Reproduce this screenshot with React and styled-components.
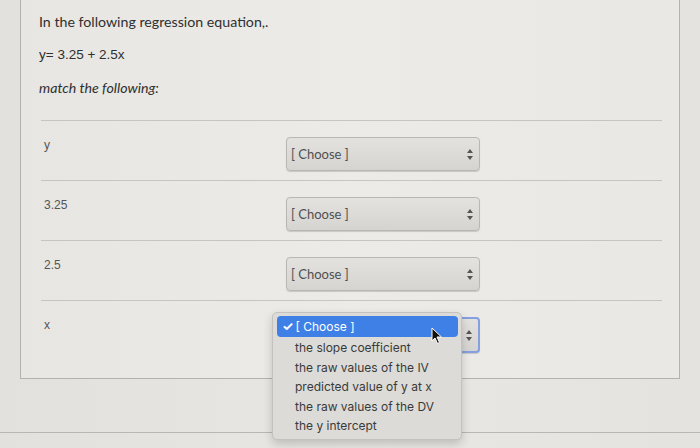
import styled, { createGlobalStyle } from "styled-components";

const GlobalStyle = createGlobalStyle`
  html, body {
    margin: 0;
    padding: 0;
    background: #e3e2de;
  }
  body {
    font-family: Lato, "Open Sans", sans-serif;
    color: #333;
  }
`;

const Page = styled.div`
  width: 700px;
  height: 448px;
  overflow: hidden;
  position: relative;
  background: linear-gradient(90deg, #e2e1dd 0%, #e8e7e3 55%, #e4e3df 100%);
`;

const Panel = styled.div`
  margin-left: 20px;
  width: 660px;
  height: 379px;
  box-sizing: border-box;
  border: 1px solid #b3b2ae;
  border-top: none;
  background: linear-gradient(90deg, #e7e6e2 0%, #ecebe7 50%, #e9e8e4 100%);
  padding: 11px 17px 0 18px;
`;

const Header = styled.div`
  display: flex;
  flex-direction: column;
  gap: 12px;
  padding-bottom: 22px;
`;

const Line = styled.div`
  font-size: ${(p) => p.size || 14.2}px;
  line-height: 21px;
  font-style: ${(p) => (p.italic ? "italic" : "normal")};
  font-family: ${(p) => (p.sans ? '"Liberation Sans", Arial, sans-serif' : "Lato, sans-serif")};
  color: #2f2f2f;
`;

const Rows = styled.div`
  margin: 0 0 0 2px;
`;

const Row = styled.div`
  display: flex;
  align-items: flex-start;
  border-top: 1px solid #c6c5c1;
  height: 60px;
  padding-top: 16px;
  box-sizing: border-box;
`;

const Label = styled.div`
  width: 242px;
  padding: 1px 0 0 3px;
  font-size: 12px;
  font-family: "Liberation Sans", Arial, sans-serif;
  color: #555;
`;

const SelectWrap = styled.div`
  position: relative;
`;

const Select = styled.div`
  width: 194px;
  height: ${(p) => (p.focused ? 36 : 34)}px;
  box-sizing: border-box;
  display: flex;
  align-items: center;
  justify-content: space-between;
  padding: 0 6px 0 4px;
  border: ${(p) => (p.focused ? "2px solid #859fe0" : "1px solid #b8b7b3")};
  border-radius: 4px;
  background: linear-gradient(#e3e2df, #d5d4d1);
  box-shadow: 0 1px 1px rgba(0, 0, 0, 0.15);
  font-size: 13px;
  color: #505050;
`;

const Arrows = styled.svg`
  display: block;
`;

const Menu = styled.div`
  position: absolute;
  left: -14px;
  top: -5px;
  width: 190px;
  box-sizing: border-box;
  padding: 3px 3px 3px 4px;
  background: #dcdbd7;
  border: 1px solid #c3c2be;
  border-radius: 5px;
  box-shadow: 0 4px 10px rgba(0, 0, 0, 0.18);
  font-family: Inter, "Noto Sans", sans-serif;
  font-size: 12px;
  z-index: 2;
`;

const Item = styled.div`
  height: ${(p) => (p.active ? 21 : 19.5)}px;
  line-height: ${(p) => (p.active ? 21 : 19.5)}px;
  padding-left: ${(p) => (p.active ? 5 : 18)}px;
  border-radius: 4px;
  background: ${(p) => (p.active ? "#3f80e6" : "transparent")};
  color: ${(p) => (p.active ? "#fff" : "#3a3a3a")};
  white-space: nowrap;
  margin-bottom: ${(p) => (p.active ? 1 : 0)}px;
`;

const Check = styled.span`
  font-weight: 700;
  font-size: 13px;
  margin-right: 2px;
`;

const Cursor = styled.svg`
  position: absolute;
  left: 158px;
  top: 14px;
`;

const BottomRule = styled.div`
  margin-top: 53px;
  border-top: 1px solid #b8b7b3;
`;

const UpDown = () => (
  <Arrows width="6" height="11" viewBox="0 0 6 11">
    <path d="M3 0 L6 4 L0 4 Z" fill="#555" />
    <path d="M3 11 L6 7 L0 7 Z" fill="#555" />
  </Arrows>
);

const rows = ["y", "3.25", "2.5", "x"];
const options = [
  "the slope coefficient",
  "the raw values of the IV",
  "predicted value of y at x",
  "the raw values of the DV",
  "the y intercept",
];

export default function App() {
  return (
    <Page>
      <GlobalStyle />
      <Panel>
        <Header>
          <Line>In the following regression equation,.</Line>
          <Line size={13.5} sans>
            y= 3.25 + 2.5x
          </Line>
          <Line italic>match the following:</Line>
        </Header>
        <Rows>
          {rows.map((r, i) => (
            <Row key={r}>
              <Label>{r}</Label>
              <SelectWrap>
                <Select focused={i === 3}>
                  <span>{i === 3 ? "" : "[ Choose ]"}</span>
                  <UpDown />
                </Select>
                {i === 3 && (
                  <Menu>
                    <Item active>
                      <Check>✓</Check>[ Choose ]
                    </Item>
                    {options.map((o) => (
                      <Item key={o}>{o}</Item>
                    ))}
                    <Cursor width="12" height="18" viewBox="0 0 12 18">
                      <path
                        d="M1 1 L1 14 L4 11 L6.5 16.5 L8.5 15.5 L6 10 L10.5 10 Z"
                        fill="#111"
                        stroke="#fff"
                        strokeWidth="1"
                      />
                    </Cursor>
                  </Menu>
                )}
              </SelectWrap>
            </Row>
          ))}
        </Rows>
      </Panel>
      <BottomRule />
    </Page>
  );
}
